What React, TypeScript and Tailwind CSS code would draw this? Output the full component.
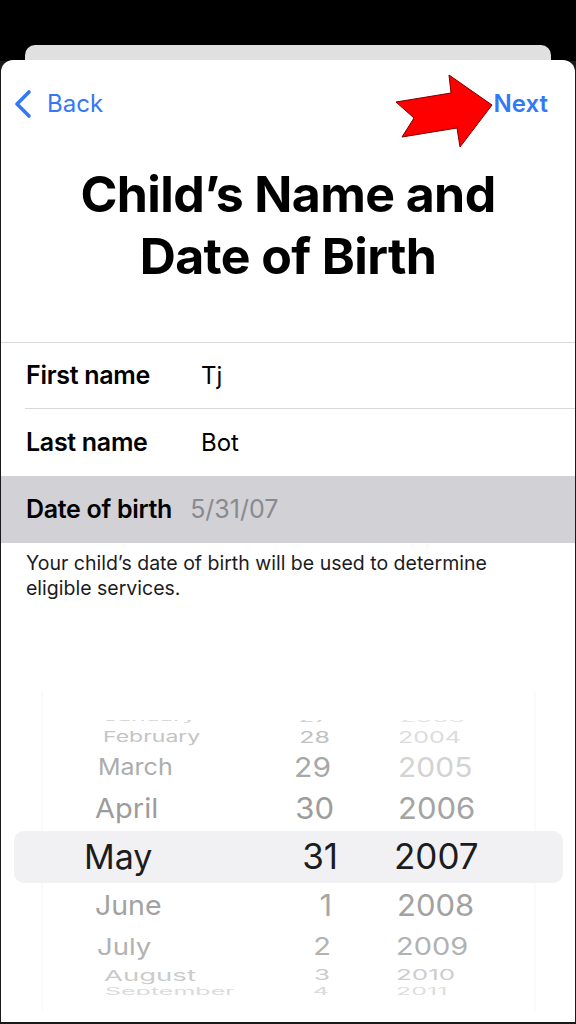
import React from 'react';

type WheelRow = {
  id: string;
  height: string;
  size: string;
  monthSize: string;
  squash: string;
  month: string;
  monthPad: string;
  monthColor: string;
  day: string;
  dayPad: string;
  dayColor: string;
  year: string;
  yearPad: string;
  yearColor: string;
  selected?: boolean;
};

// picker wheel rows, top to bottom; far rows get squashed like the iOS drum
const wheelRows: WheelRow[] = [
  { id: 'jan', height: 'h-[18px]', size: 'text-[26px]', monthSize: 'text-[24px]', squash: 'scale-y-40', month: 'January', monthPad: 'pl-[90px]', monthColor: 'text-[#d2d2d2]', day: '27', dayPad: 'pr-[9px]', dayColor: 'text-[#cfcfcf]', year: '2003', yearPad: 'pl-[62px]', yearColor: 'text-[#e3e3e3]' },
  { id: 'feb', height: 'h-[20px]', size: 'text-[25px]', monthSize: 'text-[23px]', squash: 'scale-y-65', month: 'February', monthPad: 'pl-[89px]', monthColor: 'text-[#c4c4c4]', day: '28', dayPad: 'pr-[8px]', dayColor: 'text-[#c0c0c0]', year: '2004', yearPad: 'pl-[60px]', yearColor: 'text-[#dcdcdc]' },
  { id: 'mar', height: 'h-[40px]', size: 'text-[30px]', monthSize: 'text-[25px]', squash: 'scale-y-90', month: 'March', monthPad: 'pl-[84px]', monthColor: 'text-[#acacac]', day: '29', dayPad: 'pr-[7px]', dayColor: 'text-[#a8a8a8]', year: '2005', yearPad: 'pl-[60px]', yearColor: 'text-[#d3d3d3]' },
  { id: 'apr', height: 'h-[42px]', size: 'text-[31px]', monthSize: 'text-[29px]', squash: 'scale-y-95', month: 'April', monthPad: 'pl-[81px]', monthColor: 'text-[#9c9c9c]', day: '30', dayPad: 'pr-[4px]', dayColor: 'text-[#9c9c9c]', year: '2006', yearPad: 'pl-[60px]', yearColor: 'text-[#a4a4a4]' },
  { id: 'may', height: 'h-[52px]', size: 'text-[35px]', monthSize: 'text-[34px]', squash: 'scale-y-100', month: 'May', monthPad: 'pl-[70px]', monthColor: 'text-[#1c1c1e]', day: '31', dayPad: 'pr-[0px]', dayColor: 'text-[#1c1c1e]', year: '2007', yearPad: 'pl-[56px]', yearColor: 'text-[#1c1c1e]', selected: true },
  { id: 'jun', height: 'h-[40px]', size: 'text-[31px]', monthSize: 'text-[28.5px]', squash: 'scale-y-95', month: 'June', monthPad: 'pl-[81px]', monthColor: 'text-[#a2a2a2]', day: '1', dayPad: 'pr-[6px]', dayColor: 'text-[#a6a6a6]', year: '2008', yearPad: 'pl-[59px]', yearColor: 'text-[#a2a2a2]' },
  { id: 'jul', height: 'h-[42px]', size: 'text-[29px]', monthSize: 'text-[27.5px]', squash: 'scale-y-85', month: 'July', monthPad: 'pl-[83px]', monthColor: 'text-[#b2b2b2]', day: '2', dayPad: 'pr-[7px]', dayColor: 'text-[#b2b2b2]', year: '2009', yearPad: 'pl-[58px]', yearColor: 'text-[#b2b2b2]' },
  { id: 'aug', height: 'h-[16px]', size: 'text-[26px]', monthSize: 'text-[27.5px]', squash: 'scale-y-55', month: 'August', monthPad: 'pl-[90px]', monthColor: 'text-[#cbcbcb]', day: '3', dayPad: 'pr-[8px]', dayColor: 'text-[#cbcbcb]', year: '2010', yearPad: 'pl-[58px]', yearColor: 'text-[#cdcdcd]' },
  { id: 'sep', height: 'h-[16px]', size: 'text-[25px]', monthSize: 'text-[25px]', squash: 'scale-y-40', month: 'September', monthPad: 'pl-[91px]', monthColor: 'text-[#dadada]', day: '4', dayPad: 'pr-[9px]', dayColor: 'text-[#dadada]', year: '2011', yearPad: 'pl-[58px]', yearColor: 'text-[#dedede]' },
];

function ChevronLeft() {
  return (
    <svg width="20" height="30" viewBox="0 0 20 30" fill="none">
      <path d="M16 3 L4 15 L16 27" stroke="#3478f6" strokeWidth="3.6" strokeLinecap="round" strokeLinejoin="round" />
    </svg>
  );
}

function FieldRow({ label, value, muted }: { label: string; value: string; muted?: boolean }) {
  return (
    <div className="flex h-full items-center pl-[25px]">
      <span className={muted ? 'text-[25px] font-semibold tracking-[-0.3px] text-black' : 'w-[175px] text-[25px] font-semibold tracking-[-0.3px] text-black'}>
        {label}
      </span>
      <span className={muted ? 'ml-[18px] text-[25px] text-[#8a8a8e]' : 'text-[24px] text-black'}>{value}</span>
    </div>
  );
}

export default function App() {
  return (
    <div className="relative h-[1024px] w-[576px] overflow-hidden bg-[#1a1a1a] font-['Inter','Noto_Sans',sans-serif]">
      <div className="h-[46px] bg-black" />
      <div className="-mt-px h-[16px] bg-black">
        <div className="mx-[25px] h-full rounded-t-[10px] bg-[#e0e0e0]" />
      </div>

      <div className="mx-[1px] -mt-px h-[962px] rounded-t-[12px] bg-white">
        {/* nav */}
        <div className="flex h-[87px] items-center justify-between pr-[27px] pl-[12px]">
          <div className="flex items-center gap-[14px] text-[#3478f6]">
            <ChevronLeft />
            <span className="text-[24px]">Back</span>
          </div>
          <span className="text-[24px] font-semibold text-[#3478f6]">Next</span>
        </div>

        <h1 className="mt-[16px] text-center text-[50px] leading-[62px] font-bold tracking-[-0.6px] text-black">
          Child’s Name and
          <br />
          Date of Birth
        </h1>

        <div className="mt-[55px] h-px bg-[#d9d9d9]" />
        <div className="h-[65px]">
          <FieldRow label="First name" value="Tj" />
        </div>
        <div className="ml-[24px] h-px bg-[#d9d9d9]" />
        <div className="h-[67px]">
          <FieldRow label="Last name" value="Bot" />
        </div>
        <div className="h-[67px] bg-[#d1d1d6]">
          <FieldRow label="Date of birth" value="5/31/07" muted />
        </div>

        <p className="pt-[8px] pr-[50px] pl-[25px] text-[19.5px] leading-[25px] text-[#1c1c1e]">
          Your child’s date of birth will be used to determine eligible services.
        </p>

        {/* date picker wheel */}
        <div className="mt-[90px] ml-[40px] h-[320px] w-[495px] border-x-2 border-[#fafafa] pt-[29px]">
          <div className="-mx-[29px] h-[275px] overflow-hidden">
            <div className="-mt-[10px]">
              {wheelRows.map((r) => (
                <div
                  key={r.id}
                  className={
                    r.selected
                      ? 'mt-px mb-[3px] flex h-[52px] items-center rounded-[10px] bg-[#f1f1f3]'
                      : `flex items-center ${r.height}`
                  }
                >
                  <div className={`w-[257px] ${r.monthPad}`}>
                    <span className={`inline-block leading-none ${r.monthSize} ${r.squash} ${r.monthColor}`}>{r.month}</span>
                  </div>
                  <div className={`w-[67px] text-right ${r.dayPad}`}>
                    <span className={`inline-block leading-none ${r.size} ${r.squash} ${r.dayColor}`}>{r.day}</span>
                  </div>
                  <div className={r.yearPad}>
                    <span className={`inline-block leading-none ${r.size} ${r.squash} ${r.yearColor}`}>{r.year}</span>
                  </div>
                </div>
              ))}
            </div>
          </div>
        </div>
      </div>

      {/* red annotation arrow pointing at Next */}
      <svg className="absolute top-[70px] left-[390px]" width="110" height="85" viewBox="0 0 110 85">
        <polygon
          points="6,32 61,23 59,5 102,35 70,77 67,58 12,67 24,48"
          fill="#ff0000"
          stroke="#7a0000"
          strokeWidth="1"
          strokeLinejoin="miter"
        />
      </svg>
    </div>
  );
}
